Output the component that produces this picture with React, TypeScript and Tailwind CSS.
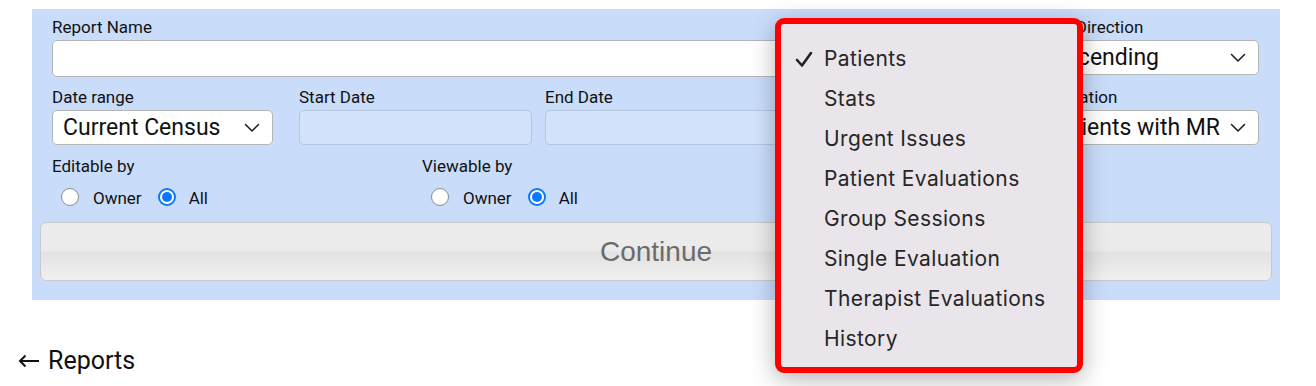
import React from "react";

const Chevron = () => (
  <svg width="16" height="10" viewBox="0 0 16 10" className="shrink-0">
    <polyline points="1.5,1.5 8,8 14.5,1.5" fill="none" stroke="#1a1a1a" strokeWidth="1.5" strokeLinecap="round" strokeLinejoin="round" />
  </svg>
);

const Label = ({ children }: { children?: React.ReactNode }) => (
  <div className="h-[18px] text-[17px] leading-[18px] text-[#111] whitespace-nowrap">{children}</div>
);

const Select = ({ text, w }: { text: string; w: string }) => (
  <div className={`mt-[4px] h-[35px] ${w} bg-white border border-[#b5b5b5] rounded-[5px] flex items-center justify-between pl-[10px] pr-[12px] pt-[1px] text-[23px] text-[#111] whitespace-nowrap overflow-hidden`}>
    <span>{text}</span>
    <Chevron />
  </div>
);

const Radio = ({ checked }: { checked?: boolean }) =>
  checked ? (
    <span className="w-[18px] h-[18px] rounded-full bg-[#0a78fe] flex items-center justify-center shrink-0">
      <span className="w-[14px] h-[14px] rounded-full bg-white flex items-center justify-center">
        <span className="w-[10px] h-[10px] rounded-full bg-[#0a78fe]" />
      </span>
    </span>
  ) : (
    <span className="w-[18px] h-[18px] rounded-full bg-white border border-[#8c8c8c] shrink-0" />
  );

const RadioGroup = () => (
  <div className="flex items-center mt-[12px] h-[20px] pl-[9px]">
    <Radio />
    <span className="ml-[14px] text-[17px] text-[#111] translate-y-[2px]">Owner</span>
    <span className="ml-[16px]"><Radio checked /></span>
    <span className="ml-[13px] text-[17px] text-[#111] translate-y-[2px]">All</span>
  </div>
);

const items = [
  "Patients",
  "Stats",
  "Urgent Issues",
  "Patient Evaluations",
  "Group Sessions",
  "Single Evaluation",
  "Therapist Evaluations",
  "History",
];

export default function App() {
  return (
    <div className="relative w-[1316px] h-[386px] bg-white overflow-hidden" style={{ fontFamily: "Roboto, 'Liberation Sans', sans-serif" }}>
      <div className="pl-[32px] pr-[36px] pt-[9px]">
        <div className="bg-[#c9ddfb] px-[8px] pt-[9px] pb-[19px]">
          <div className="px-[12px]">
            {/* Row 1 */}
            <div className="flex">
              <div className="flex flex-col w-[740px]">
                <Label>Report Name</Label>
                <div className="mt-[4px] h-[37px] bg-white border border-[#b5b5b5] rounded-[5px]" />
              </div>
              <div className="flex flex-col ml-[20px] w-[208px]">
                <Label />
                <div className="mt-[4px] h-[35px] bg-white border border-[#b5b5b5] rounded-[5px]" />
              </div>
              <div className="flex flex-col ml-[20px] w-[219px]">
                <Label>Sort Direction</Label>
                <Select text="Ascending" w="w-[219px]" />
              </div>
            </div>
            {/* Row 2 */}
            <div className="flex mt-[11px]">
              <div className="flex flex-col w-[221px]">
                <Label>Date range</Label>
                <Select text="Current Census" w="w-[221px]" />
              </div>
              <div className="flex flex-col ml-[26px] w-[233px]">
                <Label>Start Date</Label>
                <div className="mt-[4px] h-[35px] bg-[#d2e3fb] border border-[#b4c5de] rounded-[5px]" />
              </div>
              <div className="flex flex-col ml-[13px] w-[233px]">
                <Label>End Date</Label>
                <div className="mt-[4px] h-[35px] bg-[#d2e3fb] border border-[#b4c5de] rounded-[5px]" />
              </div>
              <div className="flex flex-col ml-[20px] w-[218px]">
                <Label />
                <div className="mt-[4px] h-[35px] bg-white border border-[#b5b5b5] rounded-[5px]" />
              </div>
              <div className="flex flex-col ml-[20px] w-[223px]">
                <Label>Population</Label>
                <Select text="Patients with MR" w="w-[223px]" />
              </div>
            </div>
            {/* Row 3 */}
            <div className="flex mt-[12px]">
              <div className="flex flex-col w-[370px]">
                <Label>Editable by</Label>
                <RadioGroup />
              </div>
              <div className="flex flex-col">
                <Label>Viewable by</Label>
                <RadioGroup />
              </div>
            </div>
          </div>
          {/* Continue */}
          <div className="mt-[15px] h-[59px] rounded-[6px] border border-[#c9c9c9] bg-[linear-gradient(to_bottom,#ececec_0%,#ebebeb_48%,#e2e2e2_52%,#f0f0f0_100%)] flex items-center justify-center">
            <span className="text-[28px] text-[#6b6b6b]" style={{ fontFamily: "'Liberation Sans', Arial, sans-serif" }}>Continue</span>
          </div>
        </div>
      </div>

      <div className="pl-[18px] mt-[47px] text-[25px] leading-[28px] text-[#111] flex items-center">
        <svg width="22" height="14" viewBox="0 0 22 14" className="shrink-0">
          <line x1="2" y1="7" x2="21" y2="7" stroke="#111" strokeWidth="2" />
          <polyline points="7.5,1.5 2,7 7.5,12.5" fill="none" stroke="#111" strokeWidth="2" />
        </svg>
        <span className="ml-[8px]">Reports</span>
      </div>

      {/* Open dropdown overlay */}
      <div className="absolute left-[775px] top-[18px] w-[308px] h-[355px] border-[6px] border-[#ff0000] rounded-[9px] bg-[#e9e5ea] shadow-[0_6px_24px_rgba(0,0,0,0.3)] pt-[15px] pb-[8px]" style={{ fontFamily: "Inter, 'Noto Sans', sans-serif" }}>
        {items.map((it, i) => (
          <div key={it} className="relative h-[40px] flex items-center pl-[43px] text-[21px] text-[#262626] tracking-[0.4px] whitespace-nowrap">
            {i === 0 && (
              <svg className="absolute left-[14px] top-[12px]" width="18" height="17" viewBox="0 0 18 17">
                <polyline points="2,9 7,14.5 16,2" fill="none" stroke="#222" strokeWidth="2.6" strokeLinecap="round" strokeLinejoin="round" />
              </svg>
            )}
            {it}
          </div>
        ))}
      </div>
    </div>
  );
}
